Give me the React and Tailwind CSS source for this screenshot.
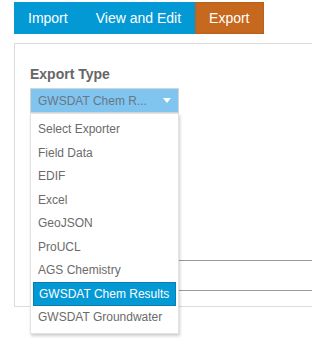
import React from 'react';

const exporters = [
  'Select Exporter',
  'Field Data',
  'EDIF',
  'Excel',
  'GeoJSON',
  'ProUCL',
  'AGS Chemistry',
  'GWSDAT Chem Results',
  'GWSDAT Groundwater',
];

export default function App() {
  const selected = 'GWSDAT Chem Results';

  return (
    <div className="min-h-screen bg-white overflow-hidden pt-[2px] pl-[14px] font-['Liberation_Sans',Arial,sans-serif]">
      {/* Tabs */}
      <div className="flex h-[32px] w-max text-[14px] text-white">
        <div className="flex items-center px-[14px] bg-[#0399d5]">Import</div>
        <div className="flex items-center px-[14px] bg-[#0399d5]">View and Edit</div>
        <div className="flex items-center px-[14px] bg-[#c6691f] shadow-[inset_0_0_2px_rgba(0,0,0,0.25)]">Export</div>
      </div>

      {/* Panel */}
      <div className="mt-[9px] w-[340px] border border-[#dcdcdc] pt-[22px] pl-[15px] pb-[15px]">
        <div className="text-[14px] font-bold leading-[16px] text-[#666]">Export Type</div>

        <div className="relative mt-[6px] w-[149px]">
          <div className="flex h-[25px] items-center justify-between border border-[#d4d4d4] bg-[#80c5ef] pl-[7px] pr-[7px] text-[12px] text-[#6a7684]">
            <span>GWSDAT Chem R...</span>
            <span className="h-0 w-0 border-x-[4.5px] border-t-[5px] border-x-transparent border-t-white"></span>
          </div>

          {/* Open dropdown */}
          <div className="absolute left-0 top-[25px] z-10 w-[149px] border border-[#e2e2e2] bg-white py-[3.5px] shadow-[1px_2px_3px_rgba(0,0,0,0.2)]">
            {exporters.map((item) =>
              item === selected ? (
                <div
                  key={item}
                  className="mx-[2px] flex h-[23.5px] items-center border border-[#0a7db3] bg-[#0399d5] pl-[5px] text-[12px] text-white"
                >
                  {item}
                </div>
              ) : (
                <div key={item} className="flex h-[23.5px] items-center pl-[7px] text-[12px] text-[#6b6b6b]">
                  {item}
                </div>
              )
            )}
          </div>
        </div>

        {/* Fields hidden behind the menu */}
        <div className="mt-[147px] border-b border-[#9a9a9a]"></div>
        <div className="mt-[29px] border-b border-[#9a9a9a]"></div>
      </div>
    </div>
  );
}
